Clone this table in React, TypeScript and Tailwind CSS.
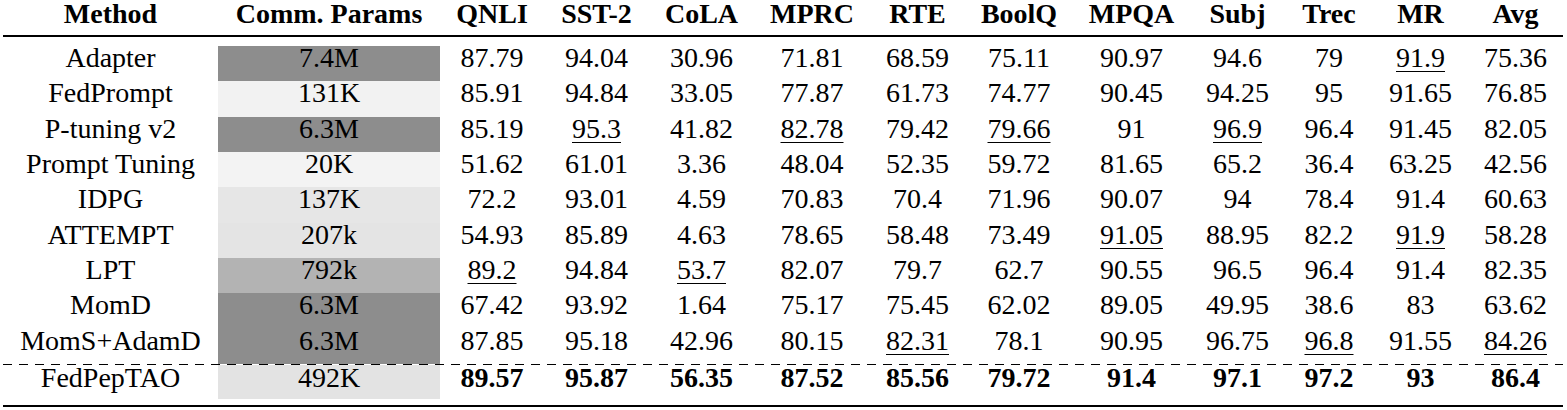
const cols =
  "grid grid-cols-[215px_222px_104px_105px_105px_116px_95px_108px_117px_95px_88px_95px_95px]";

const headers = [
  "Method",
  "Comm. Params",
  "QNLI",
  "SST-2",
  "CoLA",
  "MPRC",
  "RTE",
  "BoolQ",
  "MPQA",
  "Subj",
  "Trec",
  "MR",
  "Avg",
];

// "_" prefix = underlined (second best)
const rows = [
  { m: "Adapter", p: "7.4M", bg: "bg-[#8d8d8d]", h: "h-[35px]", v: ["87.79", "94.04", "30.96", "71.81", "68.59", "75.11", "90.97", "94.6", "79", "_91.9", "75.36"] },
  { m: "FedPrompt", p: "131K", bg: "bg-[#f2f2f2]", h: "h-[36px]", v: ["85.91", "94.84", "33.05", "77.87", "61.73", "74.77", "90.45", "94.25", "95", "91.65", "76.85"] },
  { m: "P-tuning v2", p: "6.3M", bg: "bg-[#8d8d8d]", h: "h-[35px]", v: ["85.19", "_95.3", "41.82", "_82.78", "79.42", "_79.66", "91", "_96.9", "96.4", "91.45", "82.05"] },
  { m: "Prompt Tuning", p: "20K", bg: "bg-[#f3f3f3]", h: "h-[35px]", v: ["51.62", "61.01", "3.36", "48.04", "52.35", "59.72", "81.65", "65.2", "36.4", "63.25", "42.56"] },
  { m: "IDPG", p: "137K", bg: "bg-[#e6e6e6]", h: "h-[36px]", v: ["72.2", "93.01", "4.59", "70.83", "70.4", "71.96", "90.07", "94", "78.4", "91.4", "60.63"] },
  { m: "ATTEMPT", p: "207k", bg: "bg-[#e4e4e4]", h: "h-[35px]", v: ["54.93", "85.89", "4.63", "78.65", "58.48", "73.49", "_91.05", "88.95", "82.2", "_91.9", "58.28"] },
  { m: "LPT", p: "792k", bg: "bg-[#b3b3b3]", h: "h-[35px]", v: ["_89.2", "94.84", "_53.7", "82.07", "79.7", "62.7", "90.55", "96.5", "96.4", "91.4", "82.35"] },
  { m: "MomD", p: "6.3M", bg: "bg-[#8d8d8d]", h: "h-[36px]", v: ["67.42", "93.92", "1.64", "75.17", "75.45", "62.02", "89.05", "49.95", "38.6", "83", "63.62"] },
  { m: "MomS+AdamD", p: "6.3M", bg: "bg-[#8d8d8d]", h: "h-[35px]", v: ["87.85", "95.18", "42.96", "80.15", "_82.31", "78.1", "90.95", "96.75", "_96.8", "91.55", "_84.26"] },
];

const ours = ["89.57", "95.87", "56.35", "87.52", "85.56", "79.72", "91.4", "97.1", "97.2", "93", "86.4"];

function Val({ s }: { s: string }) {
  if (s.startsWith("_")) {
    return (
      <span className="underline decoration-[1.2px] underline-offset-[4px]">{s.slice(1)}</span>
    );
  }
  return <>{s}</>;
}

export default function App() {
  return (
    <div className="w-[1567px] h-[410px] bg-white pl-[3px] font-['Liberation_Serif','Times_New_Roman',serif] text-[28px] text-black">
      <div className={`${cols} h-[35px] font-bold leading-[28px]`}>
        {headers.map((h) => (
          <div key={h} className="text-center whitespace-nowrap">
            {h}
          </div>
        ))}
      </div>
      <div className="w-[1560px] h-[2px] bg-black" />
      <div className="h-[9px]" />

      {rows.map((r) => (
        <div key={r.m} className={`${cols} ${r.h} leading-[24px]`}>
          <div className="text-center whitespace-nowrap">{r.m}</div>
          <div className={`text-center ${r.bg}`}>{r.p}</div>
          {r.v.map((s, i) => (
            <div key={i} className="text-center">
              <Val s={s} />
            </div>
          ))}
        </div>
      ))}

      <div className="w-[1560px] h-[1px] bg-[repeating-linear-gradient(to_right,#000_0px,#000_9px,transparent_9px,transparent_16px)]" />

      <div className={`${cols} h-[34px] leading-[24px]`}>
        <div className="text-center pt-[1px]">FedPepTAO</div>
        <div className="text-center pt-[1px] bg-[#e3e3e3]">492K</div>
        {ours.map((s, i) => (
          <div key={i} className="text-center pt-[1px] font-bold">
            {s}
          </div>
        ))}
      </div>
      <div className="h-[6px]" />
      <div className="w-[1560px] h-[2px] bg-black" />
    </div>
  );
}
